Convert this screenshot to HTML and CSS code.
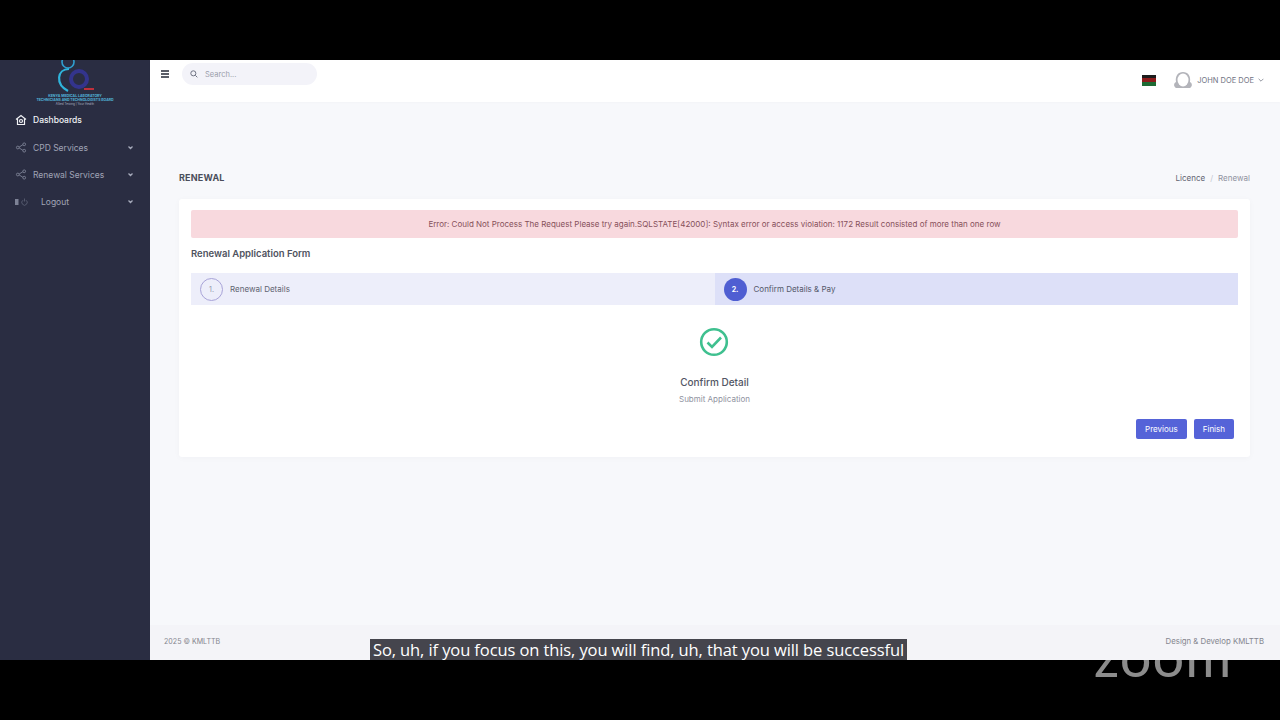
FILE: index.html

```html
<!DOCTYPE html>
<html lang="en">
<head>
  <meta charset="UTF-8">
  <title>Renewal - KMLTTB</title>
  <meta name="viewport" content="width=device-width, initial-scale=1.0">
  <link rel="stylesheet" href="styles.css">
</head>
<body>
  <div class="screen">
    <aside class="sidebar">
      <div class="logo">
        <svg class="logo-mark" width="60" height="34" viewBox="0 0 60 34" fill="none">
          <circle cx="23" cy="2" r="6" stroke="#2f9fd0" stroke-width="1.6"/>
          <path d="M24 9C12 9 10 24 23 31" stroke="#2fb4dc" stroke-width="2.2"/>
          <circle cx="34" cy="19" r="8" stroke="#33348c" stroke-width="4"/>
          <path d="M39 29h10" stroke="#c0303c" stroke-width="2"/>
        </svg>
        <div class="logo-name">KENYA MEDICAL LABORATORY<br>TECHNICIANS AND TECHNOLOGISTS BOARD</div>
        <div class="logo-tag">Allied Testing | Your Health</div>
      </div>
      <nav class="menu">
        <a class="menu-item active">
          <svg class="menu-icon" width="12" height="12" viewBox="0 0 24 24" fill="none" stroke="#f1f2f6" stroke-width="2.4"><path d="M2 11 12 3l10 8"/><path d="M5 9v12h14V9"/><circle cx="12" cy="14" r="3"/></svg>
          <span>Dashboards</span>
        </a>
        <a class="menu-item">
          <svg class="menu-icon" width="11" height="11" viewBox="0 0 24 24" fill="none" stroke="#7d8296" stroke-width="2"><circle cx="5" cy="12" r="3"/><circle cx="19" cy="5" r="3"/><circle cx="19" cy="19" r="3"/><path d="M8 11l8-5M8 13l8 5"/></svg>
          <span>CPD Services</span>
          <svg class="chev" width="5" height="5" viewBox="0 0 10 10" fill="none" stroke="#a6aabb" stroke-width="2.500"><path d="M1 3l4 4 4-4"/></svg>
        </a>
        <a class="menu-item">
          <svg class="menu-icon" width="11" height="11" viewBox="0 0 24 24" fill="none" stroke="#7d8296" stroke-width="2"><circle cx="5" cy="12" r="3"/><circle cx="19" cy="5" r="3"/><circle cx="19" cy="19" r="3"/><path d="M8 11l8-5M8 13l8 5"/></svg>
          <span>Renewal Services</span>
          <svg class="chev" width="5" height="5" viewBox="0 0 10 10" fill="none" stroke="#a6aabb" stroke-width="2.500"><path d="M1 3l4 4 4-4"/></svg>
        </a>
        <a class="menu-item">
          <svg class="logout-icon" width="14" height="8" viewBox="0 0 14 8" fill="none"><rect x="0" y="1" width="3.5" height="6" fill="#7d8296"/><path d="M8 2.2a2.7 2.7 0 1 0 3 0M9.500 .5v3" stroke="#5f6478" stroke-width=".8"/></svg>
          <span>Logout</span>
          <svg class="chev" width="5" height="5" viewBox="0 0 10 10" fill="none" stroke="#a6aabb" stroke-width="2.500"><path d="M1 3l4 4 4-4"/></svg>
        </a>
      </nav>
    </aside>

    <div class="main">
      <header class="topbar">
        <div class="burger"><i></i><i></i><i></i></div>
        <div class="search">
          <svg width="8" height="8" viewBox="0 0 12 12" fill="none" stroke="#6f7383" stroke-width="1.500"><circle cx="5" cy="5" r="3.800"/><path d="M8 8l3 3"/></svg>
          <span>Search...</span>
        </div>
        <div class="top-right">
          <div class="flag"><i class="f-black"></i><i class="f-red"></i><i class="f-green"></i></div>
          <svg class="avatar" width="20" height="18" viewBox="0 0 20 18" fill="none"><path d="M3 17c-3-2-2-5 0-6C2 5 5 1 10 1s8 4 7 10c2 1 3 4 0 6z" fill="#b3b4ba"/><ellipse cx="10" cy="9" rx="5.500" ry="6.500" fill="#fff"/></svg>
          <span class="user">JOHN DOE DOE</span>
          <svg width="6" height="6" viewBox="0 0 10 10" fill="none" stroke="#8a8d99" stroke-width="1.500"><path d="M1 3l4 4 4-4"/></svg>
        </div>
      </header>

      <main class="content">
        <div class="page-title">
          <h1>RENEWAL</h1>
          <div class="crumbs"><span>Licence</span><em>/</em><span class="crumb-now">Renewal</span></div>
        </div>

        <section class="card">
          <div class="alert">Error: Could Not Process The Request Please try again.SQLSTATE[42000]: Syntax error or access violation: 1172 Result consisted of more than one row</div>
          <h2>Renewal Application Form</h2>
          <div class="steps">
            <div class="step">
              <div class="step-num">1.</div>
              <span>Renewal Details</span>
            </div>
            <div class="step current">
              <div class="step-num">2.</div>
              <span>Confirm Details &amp; Pay</span>
            </div>
          </div>
          <div class="confirm">
            <svg width="30" height="30" viewBox="0 0 30 30" fill="none" stroke="#3fc08f"><circle cx="15" cy="15" r="12.800" stroke-width="2.600"/><path d="M8.500 15.500l4.500 4.500 9-9.500" stroke-width="2.600"/></svg>
            <h3>Confirm Detail</h3>
            <p>Submit Application</p>
          </div>
          <div class="actions">
            <button>Previous</button>
            <button>Finish</button>
          </div>
        </section>
      </main>

      <footer class="footer">
        <span class="copy">2025 © KMLTTB</span>
        <span class="credit">Design &amp; Develop KMLTTB</span>
      </footer>
    </div>
  </div>

  <div class="caption">So, uh, if you focus on this, you will find, uh, that you will be successful</div>
  <div class="zoom-mark">zoom</div>
</body>
</html>
```

FILE: styles.css

```css
html, body {
  margin: 0;
  height: 720px;
  overflow: hidden;
}
body {
  background-color: #000;
  font-family: "Inter", "Open Sans", sans-serif;
  padding-top: 60px;
  box-sizing: border-box;
  color: #495057;
}
.screen {
  position: relative;
  z-index: 1;
  display: flex;
  height: 600px;
  background-color: #f7f8fb;
}

/* sidebar */
.sidebar {
  width: 150px;
  flex-shrink: 0;
  background-color: #2a2d42;
  overflow: hidden;
}
.logo {
  height: 46px;
  display: flex;
  flex-direction: column;
  align-items: center;
  text-align: center;
}
.logo-mark {
  flex-shrink: 0;
}
.logo-name {
  font-size: 3.5px;
  line-height: 4px;
  font-weight: 700;
  color: #52b4d8;
  white-space: nowrap;
}
.logo-tag {
  font-size: 3px;
  line-height: 5px;
  color: #aab0c0;
}
.menu {
  display: flex;
  flex-direction: column;
}
.menu-item {
  display: flex;
  align-items: center;
  height: 27px;
  padding: 0 17px 0 15px;
  font-size: 8.500px;
  color: #a0a4b6;
}
.menu-item.active {
  color: #f1f2f6;
  font-weight: 500;
  margin-bottom: 1px;
}
.menu-icon {
  width: 12px;
  margin-right: 6px;
  flex-shrink: 0;
}
.logout-icon {
  margin-right: 12px;
  flex-shrink: 0;
}
.chev {
  margin-left: auto;
}

/* top bar */
.main {
  flex: 1;
  display: flex;
  flex-direction: column;
  min-width: 0;
}
.topbar {
  height: 42px;
  flex-shrink: 0;
  background-color: #fff;
  display: flex;
  align-items: flex-start;
  padding: 3px 16px 0 11px;
  box-sizing: border-box;
  box-shadow: 0 1px 2px rgba(0,0,0,0.02);
}
.burger {
  width: 8px;
  margin-top: 7px;
  display: flex;
  flex-direction: column;
  gap: 1.500px;
}
.burger i {
  display: block;
  height: 1.500px;
  background-color: #5a5e68;
}
.search {
  margin-left: 13px;
  width: 135px;
  height: 22px;
  box-sizing: border-box;
  padding-left: 8px;
  background-color: #f3f3f9;
  border-radius: 11px;
  display: flex;
  align-items: center;
  gap: 7px;
  font-size: 7.500px;
  color: #9a9dab;
}
.top-right {
  margin-left: auto;
  margin-top: 8px;
  display: flex;
  align-items: center;
  font-size: 7.500px;
  color: #6f7383;
}
.flag {
  width: 14px;
  height: 11px;
  margin-right: 17px;
  display: flex;
  flex-direction: column;
}
.flag i {
  flex: 1;
}
.f-black { background-color: #1c1c1c; }
.f-red { background-color: #8c1c1c; }
.f-green { background-color: #1d6b34; }
.avatar {
  margin-right: 4px;
}
.user {
  margin-right: 4px;
}

/* content */
.content {
  flex: 1;
  padding: 67px 30px 0 29px;
}
.page-title {
  display: flex;
  justify-content: space-between;
  align-items: center;
  height: 16px;
}
h1 {
  margin: 0;
  font-size: 9px;
  font-weight: 700;
  letter-spacing: .2px;
  color: #4a4e5a;
}
.crumbs {
  font-size: 8px;
  color: #5f6370;
  display: flex;
  gap: 5px;
  padding-top: 1px;
}
.crumbs em {
  font-style: normal;
  color: #c5c7d0;
}
.crumb-now {
  color: #8f92a0;
}
.card {
  margin-top: 14px;
  background-color: #fff;
  box-shadow: 0 1px 6px rgba(20,20,60,0.03);
  border-radius: 3px;
  padding: 11px 12px 0;
  height: 258px;
  box-sizing: border-box;
}
.alert {
  height: 28px;
  line-height: 28px;
  text-align: center;
  background-color: #f8d9de;
  color: #86505a;
  font-size: 8px;
  border-radius: 2px;
  white-space: nowrap;
}
h2 {
  margin: 10px 0 0;
  height: 25px;
  line-height: 12px;
  font-size: 9.500px;
  font-weight: 600;
  color: #4f5360;
}
.steps {
  display: grid;
  grid-template-columns: 1fr 1fr;
  height: 32px;
}
.step {
  display: flex;
  align-items: center;
  gap: 7px;
  padding-left: 9px;
  background-color: #edeefa;
  font-size: 8px;
  color: #5f6370;
}
.step.current {
  background-color: #dde0f8;
  color: #535768;
}
.step-num {
  width: 21px;
  height: 21px;
  border: 1px solid #a8a3d8;
  border-radius: 50%;
  display: flex;
  align-items: center;
  justify-content: center;
  font-size: 7px;
  color: #8f93aa;
}
.current .step-num {
  width: 23px;
  height: 23px;
  border: none;
  background-color: #4f5ed2;
  color: #fff;
  font-weight: 700;
}
.confirm {
  display: flex;
  flex-direction: column;
  align-items: center;
  padding-top: 22px;
}
.confirm svg {
  display: block;
  margin-right: 2px;
}
h3 {
  margin: 18px 0 0;
  font-size: 10px;
  line-height: 14px;
  font-weight: 500;
  color: #525664;
}
.confirm p {
  margin: 4px 0 0;
  font-size: 8px;
  line-height: 13px;
  color: #8f92a0;
}
.actions {
  margin-top: 13px;
  padding-right: 4px;
  display: flex;
  justify-content: flex-end;
  gap: 7px;
}
button {
  height: 20px;
  padding: 0 9px;
  border: none;
  border-radius: 2px;
  background-color: #5563d8;
  color: #fff;
  font-family: inherit;
  font-size: 8px;
}

/* footer */
.footer {
  height: 35px;
  flex-shrink: 0;
  padding: 0 16px 3px 14px;
  box-sizing: border-box;
  background-color: #f4f4f8;
  display: flex;
  justify-content: space-between;
  align-items: center;
  color: #85868f;
}
.copy {
  font-size: 7.100px;
}
.credit {
  font-size: 7.800px;
}

/* video overlays */
.caption {
  position: absolute;
  z-index: 2;
  left: 370px;
  top: 639px;
  width: 537px;
  height: 21px;
  line-height: 22px;
  background-color: #45454d;
  color: #fff;
  font-family: "Open Sans", sans-serif;
  font-size: 16.500px;
  letter-spacing: -.1px;
  text-align: center;
  white-space: nowrap;
}
/* sits behind .screen, so only the part below the page shows */
.zoom-mark {
  position: absolute;
  left: 1094px;
  top: 646px;
  font-family: "Lato", sans-serif;
  font-size: 56px;
  line-height: 20px;
  letter-spacing: 1px;
  color: #8c8c8c;
}
```
